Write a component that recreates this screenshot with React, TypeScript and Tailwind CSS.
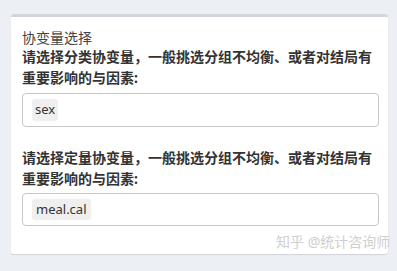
import React from "react";

export default function App() {
  const font = { fontFamily: '"Noto Sans", "Noto Sans CJK SC", sans-serif' };
  return (
    <div className="relative w-[397px] h-[271px] bg-[#ecf0f5] pt-[14px] pl-[11px]" style={font}>
      <div className="w-[377px] h-[240px] bg-white border-t-[3px] border-[#d2d6de] rounded-[3px] shadow-[0_1px_1px_rgba(0,0,0,0.12)] pl-[11px] pr-[9px] pt-[12px]">
        <div className="text-[14px] leading-[17px] text-[#444]">协变量选择</div>
        <div className="text-[14px] leading-[21px] font-bold text-[#333]">
          请选择分类协变量，一般挑选分组不均衡、或者对结局有重要影响的与因素:
        </div>
        <div className="mt-[5px] h-[34px] border border-[#c8c8c8] rounded-[4px] flex items-center pl-[9px]">
          <span className="bg-[#efefef] rounded-[3px] h-[22px] px-[3px] flex items-center text-[13px] text-[#333]">sex</span>
        </div>
        <div className="mt-[20px] text-[14px] leading-[21px] font-bold text-[#333]">
          请选择定量协变量，一般挑选分组不均衡、或者对结局有重要影响的与因素:
        </div>
        <div className="mt-[4px] h-[33px] border border-[#c8c8c8] rounded-[4px] flex items-center pl-[9px]">
          <span className="bg-[#efefef] rounded-[3px] h-[21px] px-[4px] flex items-center text-[13px] text-[#333]">meal.cal</span>
        </div>
      </div>
      <div className="absolute left-[276px] top-[231px] text-[14px] text-[#cfcfcf] whitespace-nowrap">知乎 @统计咨询师</div>
    </div>
  );
}
